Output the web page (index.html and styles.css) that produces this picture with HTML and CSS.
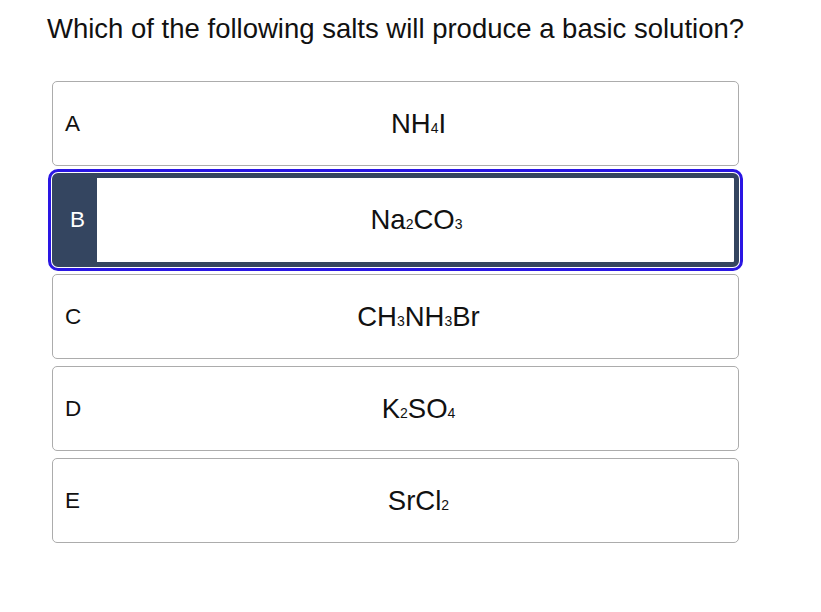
FILE: index.html
```html
<!DOCTYPE html>
<html lang="en">
<head>
<meta charset="utf-8">
<title>Question</title>
<link rel="stylesheet" href="styles.css">
</head>
<body>
<div class="page">
  <h1 class="question">Which of the following salts will produce a basic solution?</h1>
  <div class="options">
    <div class="option">
      <div class="letter">A</div>
      <div class="answer"><span class="formula">NH<sub>4</sub>I</span></div>
    </div>
    <div class="option selected">
      <div class="letter">B</div>
      <div class="answer"><span class="formula">Na<sub>2</sub>CO<sub>3</sub></span></div>
    </div>
    <div class="option">
      <div class="letter">C</div>
      <div class="answer"><span class="formula">CH<sub>3</sub>NH<sub>3</sub>Br</span></div>
    </div>
    <div class="option">
      <div class="letter">D</div>
      <div class="answer"><span class="formula">K<sub>2</sub>SO<sub>4</sub></span></div>
    </div>
    <div class="option">
      <div class="letter">E</div>
      <div class="answer"><span class="formula">SrCl<sub>2</sub></span></div>
    </div>
  </div>
</div>
</body>
</html>
```
FILE: styles.css
```css
html, body {
  margin: 0;
  padding: 0;
  background: #ffffff;
}
body {
  font-family: "Liberation Sans", Arial, sans-serif;
  color: #111111;
}
.page {
  padding: 13px 0 0 47px;
}
.question {
  margin: 0;
  font-size: 27.5px;
  font-weight: normal;
  line-height: 32px;
  height: 32px;
  color: #111111;
}
.options {
  margin: 36px 0 0 5px;
  width: 687px;
  display: flex;
  flex-direction: column;
  gap: 7px;
}
.option {
  box-sizing: border-box;
  height: 85px;
  display: flex;
  align-items: stretch;
  border: 1px solid #acacac;
  border-radius: 5px;
  background: #ffffff;
}
.letter {
  flex: 0 0 44px;
  box-sizing: border-box;
  padding-left: 12px;
  display: flex;
  align-items: center;
  font-size: 22.5px;
  color: #111111;
}
.answer {
  flex: 1;
  display: flex;
  align-items: center;
  justify-content: center;
  padding-left: 2px;
  font-size: 27.5px;
  color: #111111;
  white-space: nowrap;
}
.formula {
  line-height: 32px;
}
.formula sub {
  font-size: 14px;
  vertical-align: baseline;
  line-height: 0;
}
.selected {
  height: 94px;
  border: 5px solid #344560;
  border-radius: 6px;
  outline: 3px solid #2a16e3;
  outline-offset: 1px;
}
.selected .letter {
  flex-basis: 40px;
  padding-left: 13px;
  background: #344560;
  color: #ffffff;
}
```
